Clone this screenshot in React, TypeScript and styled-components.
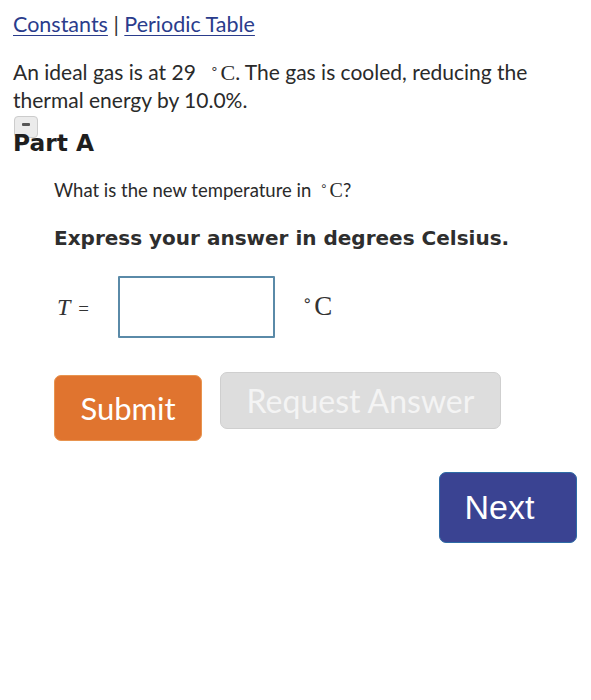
import React from "react";
import styled, { createGlobalStyle } from "styled-components";

const GlobalStyle = createGlobalStyle`
    body {
        margin:0;
        background:#ffffff;
        font-family: Lato, "Open Sans", Arial, sans-serif;
        color:#2a2a2a;
    }
`;

const Page = styled.div`
    width:591px;
    height:700px;
    box-sizing:border-box;
    padding:11px 0 0 13px;
    background:#ffffff;
`;

const Links = styled.div`
    font-size:21.5px;
    line-height:26px;
    color:#333333;
`;

const Link = styled.a`
    color:#2a3c8c;
    text-decoration:underline;
    text-underline-offset:3px;
    text-decoration-thickness:1px;
`;

const Intro = styled.p`
    margin:21px 0 0 0;
    font-size:21px;
    line-height:28px;
    color:#2a2a2a;
    width:560px;
`;

const Math = styled.span<{ $size?: number }>`
    font-family:"Liberation Serif", "Times New Roman", serif;
    font-size:${(p) => p.$size || 22}px;
    line-height:0;
`;

const Deg = styled.sup<{ $gap?: number }>`
    font-family:"DejaVu Sans", serif;
    font-size:0.6em;
    line-height:0;
    vertical-align:0.55em;
    margin:0 2px 0 ${(p) => p.$gap ?? 4}px;
`;

const PartHeader = styled.div`
    position:relative;
    margin-top:5px;
    padding-top:11px;
`;

const Toggle = styled.button`
    position:absolute;
    left:1px;
    top:-3px;
    width:24px;
    height:22px;
    padding:6px 0 0 0;
    border:1px solid #cccccc;
    border-radius:4px;
    background:#ebebeb;
    display:flex;
    justify-content:center;
    align-items:flex-start;

    &::before{
        content:"";
        width:8px;
        height:3px;
        background:#555555;
        border-radius:1px;
    }
`;

const PartTitle = styled.h2`
    position:relative;
    margin:0;
    font-family:"DejaVu Sans", "Open Sans", sans-serif;
    font-size:23.3px;
    line-height:26px;
    font-weight:700;
    color:#1e1e1e;
`;

const PartBody = styled.div`
    padding-left:41px;
`;

const Question = styled.p`
    margin:22px 0 0 0;
    font-size:18.5px;
    line-height:24px;
    color:#2a2a2a;
`;

const Instruction = styled.p`
    margin:24px 0 0 0;
    font-family:"DejaVu Sans", "Open Sans", sans-serif;
    font-size:20px;
    line-height:24px;
    font-weight:700;
    color:#2e2e2e;
`;

const AnswerRow = styled.div`
    display:flex;
    align-items:center;
    margin-top:26px;
`;

const Variable = styled.span`
    font-family:"Liberation Serif", serif;
    font-size:24px;
    color:#333333;
    width:64px;
    padding-left:3px;
    box-sizing:border-box;

    i{ margin-right:8px; }
    small{ font-size:19px; }
`;

const AnswerInput = styled.input`
    width:157px;
    height:62px;
    box-sizing:border-box;
    border:2px solid #5a8aa8;
    border-radius:1px;
    background:#ffffff;
    outline:none;
`;

const Unit = styled.span`
    font-family:"Liberation Serif", serif;
    font-size:27px;
    color:#333333;
    margin-left:27px;
    margin-top:-2px;
`;

const ButtonRow = styled.div`
    display:flex;
    align-items:flex-start;
    gap:18px;
    margin-top:34px;
`;

const ActionButton = styled.button<{ $primary?: boolean }>`
    font-family: Lato, "Open Sans", sans-serif;
    box-sizing:border-box;
    border-radius:7px;
    cursor:pointer;
    padding:0;
    ${(p) =>
        p.$primary
            ? `
        margin-top:3px;
        width:148px;
        height:66px;
        background:#e0742f;
        border:1px solid #e8944f;
        color:#ffffff;
        font-size:31px;
    `
            : `
        width:281px;
        height:57px;
        background:#dddddd;
        border:1px solid #cfcfcf;
        color:#f4f4f4;
        font-size:32px;
    `}
`;

const NextRow = styled.div`
    display:flex;
    justify-content:flex-end;
    margin:31px 14px 0 0;
`;

const NextButton = styled.button`
    width:138px;
    height:71px;
    box-sizing:border-box;
    background:#3a4392;
    border:1px solid #2e6ca6;
    border-radius:7px;
    color:#ffffff;
    font-family:"Liberation Sans", Arial, sans-serif;
    font-size:34px;
    padding:0 17px 0 0;
    cursor:pointer;
`;

const App = () => {
    return (
        <>
            <GlobalStyle />
            <Page>
                <Links>
                    <Link href="#">Constants</Link> | <Link href="#">Periodic Table</Link>
                </Links>
                <Intro>
                    An ideal gas is at 29 <Math><Deg $gap={9}>∘</Deg>C</Math>. The gas is cooled, reducing the
                    <br />
                    thermal energy by 10.0%.
                </Intro>
                <PartHeader>
                    <Toggle aria-label="collapse" />
                    <PartTitle>Part A</PartTitle>
                </PartHeader>
                <PartBody>
                    <Question>
                        What is the new temperature in <Math $size={20}><Deg>∘</Deg>C</Math>?
                    </Question>
                    <Instruction>Express your answer in degrees Celsius.</Instruction>
                    <AnswerRow>
                        <Variable><i>T</i><small>=</small></Variable>
                        <AnswerInput type="text" />
                        <Unit><Deg $gap={0}>∘</Deg>C</Unit>
                    </AnswerRow>
                    <ButtonRow>
                        <ActionButton $primary>Submit</ActionButton>
                        <ActionButton>Request Answer</ActionButton>
                    </ButtonRow>
                </PartBody>
                <NextRow>
                    <NextButton>Next</NextButton>
                </NextRow>
            </Page>
        </>
    );
};

export default App;
